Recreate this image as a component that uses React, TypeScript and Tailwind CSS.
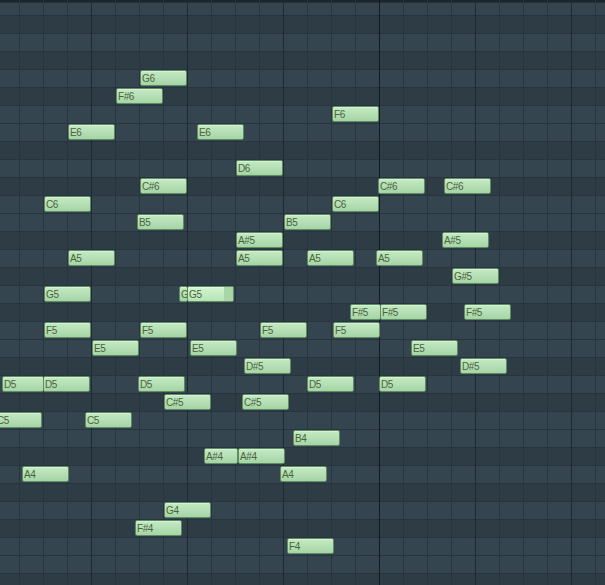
import React from 'react';

const NAMES = ['B', 'A#', 'A', 'G#', 'G', 'F#', 'F', 'E', 'D#', 'D', 'C#', 'C'];
const ROW_COUNT = 33;
const COL_COUNT = 25;

type Note = { n: string; x: number; w?: number; hover?: boolean };

const NOTES: Note[] = [
  { n: 'G6', x: 140 },
  { n: 'F#6', x: 116 },
  { n: 'F6', x: 332 },
  { n: 'E6', x: 68 },
  { n: 'E6', x: 197 },
  { n: 'D6', x: 236 },
  { n: 'C#6', x: 140 },
  { n: 'C#6', x: 378 },
  { n: 'C#6', x: 444 },
  { n: 'C6', x: 44 },
  { n: 'C6', x: 332 },
  { n: 'B5', x: 137 },
  { n: 'B5', x: 284 },
  { n: 'A#5', x: 236 },
  { n: 'A#5', x: 442 },
  { n: 'A5', x: 68 },
  { n: 'A5', x: 236 },
  { n: 'A5', x: 307 },
  { n: 'A5', x: 376 },
  { n: 'G#5', x: 452 },
  { n: 'G5', x: 44 },
  { n: 'G5', x: 179, w: 9 },
  { n: 'G5', x: 187, hover: true },
  { n: 'F#5', x: 350, w: 31 },
  { n: 'F#5', x: 380 },
  { n: 'F#5', x: 464 },
  { n: 'F5', x: 44 },
  { n: 'F5', x: 140 },
  { n: 'F5', x: 260 },
  { n: 'F5', x: 333 },
  { n: 'E5', x: 92 },
  { n: 'E5', x: 190 },
  { n: 'E5', x: 411 },
  { n: 'D#5', x: 244 },
  { n: 'D#5', x: 460 },
  { n: 'D5', x: 2, w: 42 },
  { n: 'D5', x: 43 },
  { n: 'D5', x: 138 },
  { n: 'D5', x: 307 },
  { n: 'D5', x: 379 },
  { n: 'C#5', x: 164 },
  { n: 'C#5', x: 242 },
  { n: 'C5', x: -5 },
  { n: 'C5', x: 85 },
  { n: 'B4', x: 293 },
  { n: 'A#4', x: 204, w: 34 },
  { n: 'A#4', x: 238 },
  { n: 'A4', x: 22 },
  { n: 'A4', x: 280 },
  { n: 'G4', x: 164 },
  { n: 'F#4', x: 135 },
  { n: 'F4', x: 287 },
];

// row index from the top (B6 = 0)
function rowOf(n: string) {
  const name = n.slice(0, -1);
  const oct = Number(n.slice(-1));
  return (6 - oct) * 12 + NAMES.indexOf(name);
}

function isBlack(k: number) {
  return NAMES[k % 12].includes('#');
}

function NoteBlock({ note }: { note: Note }) {
  const top = rowOf(note.n) * 18 - 2;
  const width = note.w ?? 47;
  return (
    <div
      className={`absolute h-[16px] overflow-hidden rounded-[2px] border border-[#5d8c62] shadow-[inset_0_1px_0_rgba(255,255,255,0.35)] ${
        note.hover
          ? 'bg-gradient-to-b from-[#d2f5d2] to-[#b6e4b6]'
          : 'bg-gradient-to-b from-[#c4eac4] to-[#a6d5a6]'
      }`}
      style={{ left: note.x, top, width }}
    >
      <div className="whitespace-nowrap pl-[1px] pt-[1px] font-['Liberation_Sans',Arial,sans-serif] text-[10px] leading-[13px] tracking-[-0.4px] text-[#4b633b]">
        {note.n}
      </div>
      {note.hover && (
        <div className="absolute right-0 top-0 h-full w-[9px] bg-[#a9d6a9]" />
      )}
    </div>
  );
}

export default function App() {
  const rows = Array.from({ length: ROW_COUNT }, (_, k) => k);
  const cols = Array.from({ length: COL_COUNT }, (_, k) => k);

  return (
    <div className="relative h-[585px] w-[605px] overflow-hidden bg-[#2e3d47]">
      {/* top edge */}
      <div className="h-[3px] bg-[#1c252b] border-b border-[#263239]" />

      {/* key rows */}
      <div className="flex flex-col">
        {rows.map((k) => (
          <div
            key={k}
            className={`shrink-0 ${
              k === 0 ? 'h-[12px]' : 'h-[18px] border-t border-[#28353e]'
            } ${isBlack(k) ? 'bg-[#2e3c46]' : 'bg-[#35454f]'}`}
          />
        ))}
      </div>

      {/* vertical grid lines */}
      <div className="pointer-events-none absolute inset-0 flex">
        <div className="w-[19px] shrink-0" />
        {cols.map((k) => {
          const step = k + 1;
          const cls =
            step % 16 === 0
              ? 'border-[#141b20]'
              : step % 4 === 0
                ? 'border-[#1f2930]'
                : 'border-[#28353e]';
          return <div key={k} className={`h-full w-[24px] shrink-0 border-l ${cls}`} />;
        })}
      </div>

      {/* notes */}
      {NOTES.map((note, i) => (
        <NoteBlock key={i} note={note} />
      ))}
    </div>
  );
}
